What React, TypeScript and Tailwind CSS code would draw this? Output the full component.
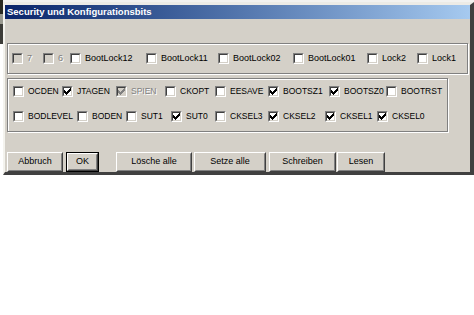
import React from 'react';

type Bit = { label: string; w: string; checked?: boolean; disabled?: boolean };

const row1: Bit[] = [
  { label: '7', w: 'w-[31px]', disabled: true },
  { label: '6', w: 'w-[27px]', disabled: true },
  { label: 'BootLock12', w: 'w-[76px]' },
  { label: 'BootLock11', w: 'w-[72px]' },
  { label: 'BootLock02', w: 'w-[75px]' },
  { label: 'BootLock01', w: 'w-[74px]' },
  { label: 'Lock2', w: 'w-[50px]' },
  { label: 'Lock1', w: 'w-[44px]' },
];

const row2: Bit[] = [
  { label: 'OCDEN', w: 'w-[49px]' },
  { label: 'JTAGEN', w: 'w-[54px]', checked: true },
  { label: 'SPIEN', w: 'w-[49px]', checked: true, disabled: true },
  { label: 'CKOPT', w: 'w-[50px]' },
  { label: 'EESAVE', w: 'w-[53px]' },
  { label: 'BOOTSZ1', w: 'w-[61px]', checked: true },
  { label: 'BOOTSZ0', w: 'w-[57px]', checked: true },
  { label: 'BOOTRST', w: 'w-[58px]' },
];

const row3: Bit[] = [
  { label: 'BODLEVEL', w: 'w-[64px]' },
  { label: 'BODEN', w: 'w-[49px]' },
  { label: 'SUT1', w: 'w-[45px]' },
  { label: 'SUT0', w: 'w-[44px]', checked: true },
  { label: 'CKSEL3', w: 'w-[53px]' },
  { label: 'CKSEL2', w: 'w-[57px]', checked: true },
  { label: 'CKSEL1', w: 'w-[52px]', checked: true },
  { label: 'CKSEL0', w: 'w-[50px]', checked: true },
];

const CheckBox: React.FC<{ checked?: boolean; disabled?: boolean }> = ({ checked, disabled }) => (
  <span className="w-[11px] h-[11px] shrink-0 border border-t-[#808080] border-l-[#808080] border-b-white border-r-white">
    <span
      className={`flex items-center justify-center w-full h-full border border-t-[#404040] border-l-[#404040] border-b-[#d4d0c8] border-r-[#d4d0c8] ${
        disabled ? 'bg-[#d4d0c8]' : 'bg-white'
      }`}
    >
      {checked && (
        <svg width="7" height="7" viewBox="0 0 7 7" shapeRendering="crispEdges">
          <path
            d="M6 0h1v3h-1v1h-1v1h-1v1h-1v1h-1v-1h-1v-1h-1v-3h1v1h1v1h1v-1h1v-1h1z"
            fill={disabled ? '#808080' : '#000'}
          />
        </svg>
      )}
    </span>
  </span>
);

const BitRow: React.FC<{ bits: Bit[]; caps?: boolean }> = ({ bits, caps }) => (
  <div className="flex items-center">
    {bits.map((b) => (
      <div key={b.label} className={`flex items-center shrink-0 ${b.w}`}>
        <CheckBox checked={b.checked} disabled={b.disabled} />
        <span
          className={`ml-[4px] leading-none whitespace-nowrap ${caps ? 'text-[8.5px]' : 'text-[9px]'} ${
            b.disabled ? 'text-[#808080] [text-shadow:1px_1px_0_#fff]' : 'text-black'
          }`}
        >
          {b.label}
        </span>
      </div>
    ))}
  </div>
);

const Button: React.FC<{ label: string; w: string; ml: string; isDefault?: boolean }> = ({ label, w, ml, isDefault }) => (
  <div className={`${w} ${ml} h-[20px] ${isDefault ? 'border border-black' : ''}`}>
    <div className="h-full border border-t-white border-l-white border-b-[#404040] border-r-[#404040]">
      <div className="h-full flex items-center justify-center border border-t-[#d4d0c8] border-l-[#d4d0c8] border-b-[#808080] border-r-[#808080] text-[9px] text-black">
        {label}
      </div>
    </div>
  </div>
);

export default function App() {
  return (
    <div className="w-[474px] h-[315px] bg-white overflow-hidden flex font-['Liberation_Sans',Arial,sans-serif]">
      <div className="w-[3px] shrink-0 flex flex-col">
        <div className="h-[14px] bg-[#2a2a22]" />
        <div className="h-[10px] bg-[#9a9a90]" />
        <div className="h-[20px] bg-[#3c3c38]" />
      </div>
      <div className="flex flex-col">
        <div className="h-[2px] bg-[#f2f2f0]" />
        <div className="w-[471px] h-[173px] bg-[#d4d0c8] border-l-2 border-t-[3px] border-r-4 border-b-[3px] border-l-[#f4f3ee] border-t-[#ecebe6] border-r-[#404040] border-b-[#404040] flex flex-col">
          <div className="h-[14px] flex items-center pl-[2px] bg-gradient-to-r from-[#0a246a] to-[#a6caf0]">
            <span className="text-white font-bold text-[9.5px] leading-none">Security und Konfigurationsbits</span>
          </div>

          <div className="mt-[24px] ml-[2px] w-[461px] h-[31px] border border-[#808080] shadow-[inset_1px_1px_0_#fff,1px_1px_0_#fff] flex items-center pl-[4px]">
            <BitRow bits={row1} />
          </div>

          <div className="mt-[4px] ml-[2px] w-[441px] h-[54px] border border-[#808080] shadow-[inset_1px_1px_0_#fff,1px_1px_0_#fff] flex flex-col pl-[5px] pt-[7px] gap-[14px]">
            <BitRow bits={row2} caps />
            <BitRow bits={row3} caps />
          </div>

          <div className="mt-[20px] flex">
            <Button label="Abbruch" w="w-[56px]" ml="ml-[2px]" />
            <Button label="OK" w="w-[33px]" ml="ml-[3px]" isDefault />
            <Button label="Lösche alle" w="w-[76px]" ml="ml-[17px]" />
            <Button label="Setze alle" w="w-[72px]" ml="ml-[2px]" />
            <Button label="Schreiben" w="w-[67px]" ml="ml-[3px]" />
            <Button label="Lesen" w="w-[48px]" ml="ml-[1px]" />
          </div>
        </div>
      </div>
    </div>
  );
}
